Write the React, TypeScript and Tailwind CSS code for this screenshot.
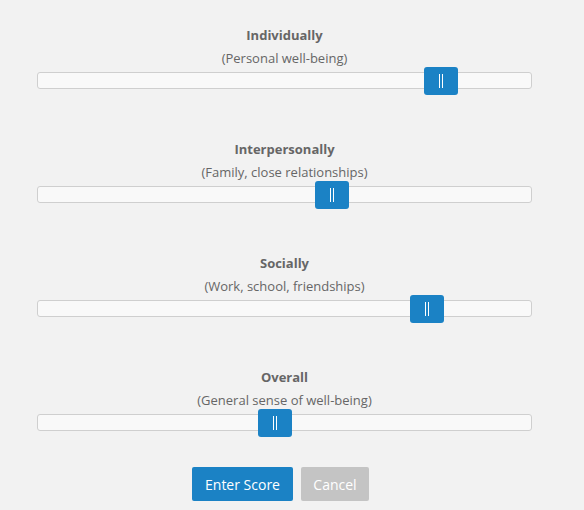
const sliders = [
  { title: "Individually", sub: "(Personal well-being)", left: 386 },
  { title: "Interpersonally", sub: "(Family, close relationships)", left: 277 },
  { title: "Socially", sub: "(Work, school, friendships)", left: 372 },
  { title: "Overall", sub: "(General sense of well-being)", left: 220 },
];

export default function App() {
  return (
    <div className="min-h-[510px] w-[584px] bg-[#f2f2f2] pt-[25px] font-['Open_Sans',sans-serif] text-[#666]">
      <div className="ml-[37px] w-[495px]">
        {sliders.map((s, i) => (
          <div key={i} className={i > 0 ? "mt-[50px]" : ""}>
            <div className="text-center text-[13px] font-bold leading-[20px]">{s.title}</div>
            <div className="mt-[3px] text-center text-[13px] leading-[20px]">{s.sub}</div>
            <div className="relative mt-[4px] h-[17px] rounded-[3px] border border-[#cfcfcf] bg-[#f9f9f9]">
              <div
                className="absolute top-[-6px] flex h-[28px] w-[34px] items-center justify-center gap-[2px] rounded-[3px] bg-[#1b82c5]"
                style={{ left: s.left }}
              >
                <span className="h-[14px] w-px bg-white" />
                <span className="h-[14px] w-px bg-white" />
              </div>
            </div>
          </div>
        ))}
        <div className="mt-[36px] flex justify-center gap-[8px] pr-[8px]">
          <button className="h-[34px] w-[101px] rounded-[2px] bg-[#1b82c5] text-[14px] text-white">Enter Score</button>
          <button className="h-[34px] w-[68px] rounded-[2px] bg-[#c4c4c4] text-[14px] text-white">Cancel</button>
        </div>
      </div>
    </div>
  );
}
